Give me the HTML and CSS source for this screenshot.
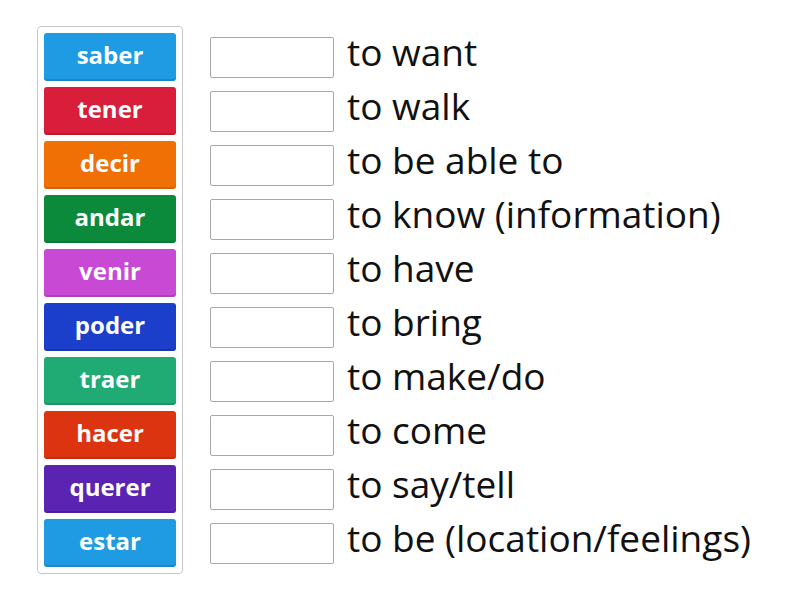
FILE: index.html
```html
<!DOCTYPE html>
<html lang="en">
<head>
    <meta charset="UTF-8">
    <meta name="viewport" content="width=device-width, initial-scale=1.0">
    <title>Spanish Verbs Match Up</title>
    <link rel="stylesheet" href="styles.css">
</head>
<body>
    <div class="game">
        <div class="word-bank">
            <div class="tile tile-blue">saber</div>
            <div class="tile tile-red">tener</div>
            <div class="tile tile-orange">decir</div>
            <div class="tile tile-green">andar</div>
            <div class="tile tile-magenta">venir</div>
            <div class="tile tile-navy">poder</div>
            <div class="tile tile-teal">traer</div>
            <div class="tile tile-rust">hacer</div>
            <div class="tile tile-purple">querer</div>
            <div class="tile tile-blue">estar</div>
        </div>

        <div class="targets">
            <div class="target"><div class="drop-box"></div><span class="meaning">to want</span></div>
            <div class="target"><div class="drop-box"></div><span class="meaning">to walk</span></div>
            <div class="target"><div class="drop-box"></div><span class="meaning">to be able to</span></div>
            <div class="target"><div class="drop-box"></div><span class="meaning">to know (information)</span></div>
            <div class="target"><div class="drop-box"></div><span class="meaning">to have</span></div>
            <div class="target"><div class="drop-box"></div><span class="meaning">to bring</span></div>
            <div class="target"><div class="drop-box"></div><span class="meaning">to make/do</span></div>
            <div class="target"><div class="drop-box"></div><span class="meaning">to come</span></div>
            <div class="target"><div class="drop-box"></div><span class="meaning">to say/tell</span></div>
            <div class="target"><div class="drop-box"></div><span class="meaning">to be (location/feelings)</span></div>
        </div>
    </div>
</body>
</html>
```

FILE: styles.css
```css
body {
    margin: 0;
    background-color: white;
    font-family: 'Open Sans', 'Noto Sans', sans-serif;
    color: #111;
}
.game {
    display: flex;
    align-items: flex-start;
    gap: 27px;
    padding: 26px 0 0 37px;
}
.word-bank {
    display: flex;
    flex-direction: column;
    gap: 6px;
    padding: 6px;
    border: 1px solid #c8c8c8;
    border-radius: 4px;
}
.tile {
    width: 132px;
    height: 48px;
    box-sizing: border-box;
    padding-bottom: 6px;
    display: flex;
    align-items: center;
    justify-content: center;
    border-radius: 3px;
    color: white;
    font-size: 24px;
    font-weight: 700;
    box-shadow: inset 0 -2px 0 rgba(0, 0, 0, 0.12);
}
.tile-blue { background-color: #1e9be2; }
.tile-red { background-color: #d81e3a; }
.tile-orange { background-color: #f07006; }
.tile-green { background-color: #0b8a3b; }
.tile-magenta { background-color: #c84ad4; }
.tile-navy { background-color: #1b3fcb; }
.tile-teal { background-color: #20aa74; }
.tile-rust { background-color: #dc3410; }
.tile-purple { background-color: #5b23b2; }
.targets {
    display: flex;
    flex-direction: column;
    gap: 6px;
    padding-top: 7px;
}
.target {
    height: 48px;
    display: flex;
    align-items: center;
    gap: 13px;
}
.drop-box {
    width: 122px;
    height: 39px;
    border: 1px solid #a8a8a8;
    border-radius: 2px;
    background-color: white;
}
.meaning {
    font-size: 37px;
    line-height: 1;
    padding-bottom: 12px;
    white-space: nowrap;
}
```
